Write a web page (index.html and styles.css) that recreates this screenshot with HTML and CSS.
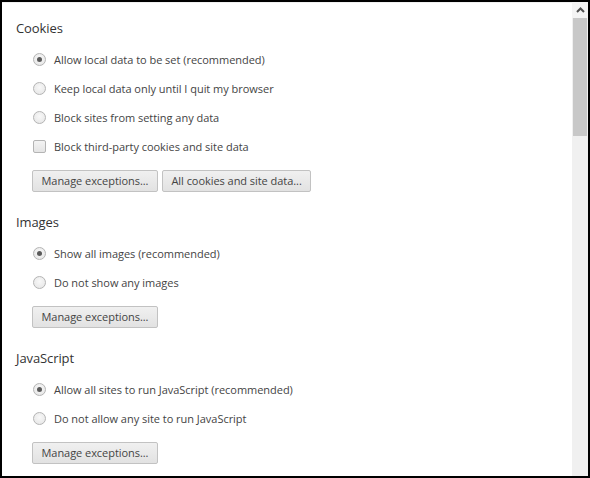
FILE: index.html
```html
<!DOCTYPE html>
<html>
<head>
<meta charset="utf-8">
<link rel="stylesheet" href="styles.css">
</head>
<body>
<div class="frame">
  <div class="content">
    <section class="group first">
      <h2 class="group-title">Cookies</h2>
      <div class="option"><span class="radio checked"></span><span class="label">Allow local data to be set (recommended)</span></div>
      <div class="option"><span class="radio"></span><span class="label">Keep local data only until I quit my browser</span></div>
      <div class="option"><span class="radio"></span><span class="label">Block sites from setting any data</span></div>
      <div class="option"><span class="checkbox"></span><span class="label">Block third-party cookies and site data</span></div>
      <div class="buttons">
        <button class="btn">Manage exceptions...</button>
        <button class="btn">All cookies and site data...</button>
      </div>
    </section>
    <section class="group">
      <h2 class="group-title">Images</h2>
      <div class="option"><span class="radio checked"></span><span class="label">Show all images (recommended)</span></div>
      <div class="option"><span class="radio"></span><span class="label">Do not show any images</span></div>
      <div class="buttons">
        <button class="btn">Manage exceptions...</button>
      </div>
    </section>
    <section class="group">
      <h2 class="group-title">JavaScript</h2>
      <div class="option"><span class="radio checked"></span><span class="label">Allow all sites to run JavaScript (recommended)</span></div>
      <div class="option"><span class="radio"></span><span class="label">Do not allow any site to run JavaScript</span></div>
      <div class="buttons">
        <button class="btn">Manage exceptions...</button>
      </div>
    </section>
  </div>
  <div class="scrollbar">
    <div class="arrow">
      <svg width="9" height="6" viewBox="0 0 9 6"><path d="M1 5 L4.5 1.5 L8 5" fill="none" stroke="#505050" stroke-width="2"/></svg>
    </div>
    <div class="thumb"></div>
    <div class="track"></div>
  </div>
</div>
</body>
</html>
```
FILE: styles.css
```css
html, body {
  margin: 0;
  padding: 0;
  background: #ffffff;
}
.frame {
  width: 590px;
  height: 478px;
  box-sizing: border-box;
  border: 2px solid #000;
  display: flex;
  overflow: hidden;
  font-family: "Open Sans", "Noto Sans", sans-serif;
  color: #333;
}
.content {
  flex: 1;
  padding-left: 14px;
  border-top: 1px solid #f0f0f0;
}
.group {
  margin-top: 20px;
}
.group.first {
  margin-top: 15px;
}
.group-title {
  margin: 0 0 7px 0;
  font-size: 13px;
  font-weight: 400;
  line-height: 20px;
  height: 20px;
  color: #333;
  letter-spacing: -0.1px;
}
.option {
  height: 29px;
  display: flex;
  align-items: center;
  padding-left: 17px;
}
.label {
  font-size: 11px;
  color: #444;
  margin-left: 8px;
  letter-spacing: -0.03px;
}
.radio {
  width: 13px;
  height: 13px;
  box-sizing: border-box;
  border-radius: 50%;
  border: 1px solid #b4b4b4;
  background: radial-gradient(circle at 50% 40%, #f8f8f8 0%, #e4e4e4 100%);
  display: flex;
  align-items: center;
  justify-content: center;
  flex: none;
}
.radio.checked::after {
  content: "";
  width: 5px;
  height: 5px;
  border-radius: 50%;
  background: #5a5a5a;
}
.checkbox {
  width: 13px;
  height: 13px;
  box-sizing: border-box;
  border-radius: 2px;
  border: 1px solid #b4b4b4;
  background: linear-gradient(#f4f4f4, #e4e4e4);
  flex: none;
}
.buttons {
  display: flex;
  gap: 4px;
  margin-top: 9px;
  padding-left: 16px;
}
.btn {
  height: 22px;
  box-sizing: border-box;
  border: 1px solid #c2c2c2;
  border-radius: 2px;
  background: linear-gradient(#f0f0f0, #e2e2e2);
  font-family: "Open Sans", "Noto Sans", sans-serif;
  font-size: 11px;
  color: #444;
  padding: 0 8.5px;
  line-height: 20px;
  letter-spacing: -0.05px;
}
.scrollbar {
  width: 16px;
  flex: none;
  display: flex;
  flex-direction: column;
  background: #f0f0f0;
}
.arrow {
  height: 16px;
  background: #f4f4f4;
  display: flex;
  align-items: center;
  justify-content: center;
}
.thumb {
  height: 118px;
  background: #c8c8c8;
  margin: 0 1px;
}
.track {
  flex: 1;
  background: #f0f0f0;
}
```
